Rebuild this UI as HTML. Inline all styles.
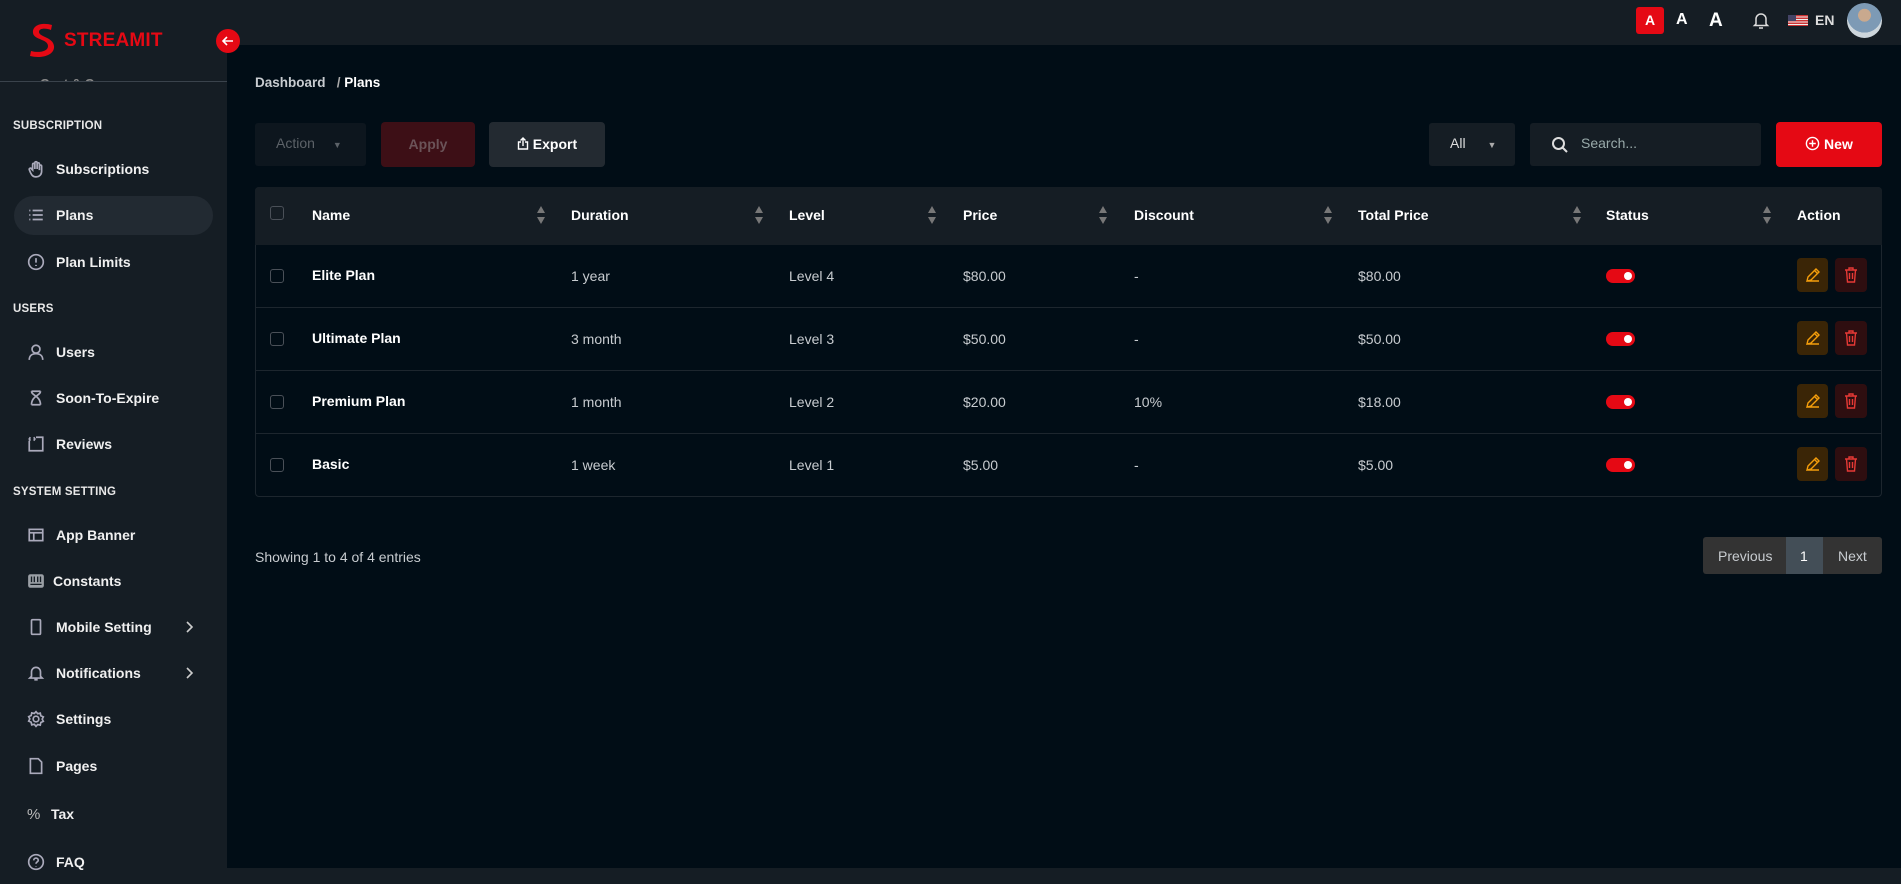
<!DOCTYPE html>
<html><head><meta charset="utf-8"><style>
*{box-sizing:border-box;margin:0;padding:0}
body{width:1901px;height:884px;background:#010d16;font-family:"Liberation Sans",sans-serif;color:#fff;position:relative;overflow:hidden;font-size:14px}
.a{position:absolute}
.side{left:0;top:0;width:227px;height:884px;background:#151d24}
.top{left:227px;top:0;width:1674px;height:45px;background:#151d24}
.bot{left:227px;top:868px;width:1674px;height:16px;background:#151d24}
.sec{left:13px;font-size:11.5px;font-weight:bold;color:#e8e8e8;letter-spacing:.2px}
.it{left:27px;font-size:14px;font-weight:bold;color:#f0f0f0;display:flex;align-items:center;gap:11px;height:20px}
.it svg{width:18px;height:18px;stroke:#aab;fill:none;stroke-width:1.5}
.th{font-weight:bold;font-size:14px;color:#fff}
.td{font-size:14px;color:#c8ccd0}
.sort{width:8px;height:18px}
.cb{width:14px;height:14px;border:1.5px solid #4a5058;border-radius:3px}
.tg{width:29px;height:14px;border-radius:7px;background:#e50914}
.tg:after{content:"";position:absolute;right:3px;top:3px;width:8px;height:8px;border-radius:50%;background:#fff}
.eb{width:31px;height:34px;border-radius:4px;background:#3a2506;display:flex;align-items:center;justify-content:center}
.db{width:32px;height:34px;border-radius:4px;background:#2e0e10;display:flex;align-items:center;justify-content:center}
.rl{left:256px;width:1626px;height:1px;background:#1d262e}
</style></head><body>
<div class="a side"></div>
<div class="a top"></div>
<div class="a bot"></div>
<!-- logo -->
<svg class="a" style="left:28px;top:22px" width="28" height="36" viewBox="0 0 28 36"><path d="M24 3 C14 0 4 3 5 11 C6 18 20 17 20 24 C20 30 10 31 3 29 L2 34 C14 37 27 33 26 24 C25 15 11 15 11 10 C11 6 18 6 23 8 Z" fill="#e50914"/></svg>
<div class="a" style="left:64px;top:30px;font-size:19px;font-weight:bold;color:#e50914;letter-spacing:.2px">STREAMIT</div>
<div class="a" style="left:216px;top:29px;width:24px;height:24px;border-radius:50%;background:#e50914"></div>
<svg class="a" style="left:220px;top:33px" width="16" height="16" viewBox="0 0 16 16" fill="none" stroke="#fff" stroke-width="1.6"><path d="M13 8H3M7 4L3 8l4 4"/></svg>
<div class="a" style="left:40px;top:76px;font-size:13px;font-weight:bold;color:#888;clip-path:inset(0 0 60% 0)">Cast &amp; Crew</div>
<div class="a" style="left:0;top:81px;width:227px;height:1px;background:#3a434c"></div>

<div class="a sec" style="top:120px">SUBSCRIPTION</div>
<div class="a it" style="top:159px"><svg viewBox="0 0 16 16"><path d="M5 9V4a1 1 0 012 0v4V2.5a1 1 0 012 0V8V3.5a1 1 0 012 0V9V5.5a1 1 0 012 0V10c0 3-2 5-5 5S4 13 3 11L2 8.5a1 1 0 012-.5z"/></svg>Subscriptions</div>
<div class="a" style="left:14px;top:196px;width:199px;height:39px;border-radius:20px;background:#222a32"></div>
<div class="a it" style="top:205px"><svg viewBox="0 0 16 16"><path d="M2 4h1M2 8h1M2 12h1M5 4h9M5 8h9M5 12h9"/></svg>Plans</div>
<div class="a it" style="top:252px"><svg viewBox="0 0 16 16"><circle cx="8" cy="8" r="6.5"/><path d="M8 4.5v4M8 10.5v1"/></svg>Plan Limits</div>
<div class="a sec" style="top:303px">USERS</div>
<div class="a it" style="top:342px"><svg viewBox="0 0 16 16"><circle cx="8" cy="5.5" r="3.5"/><path d="M2 15c0-4 3-5.5 6-5.5s6 1.5 6 5.5"/></svg>Users</div>
<div class="a it" style="top:388px"><svg viewBox="0 0 16 16"><path d="M4 2h8M4 14h8M4 2c0 4 8 4 8 12M12 2c0 4-8 4-8 12"/></svg>Soon-To-Expire</div>
<div class="a it" style="top:434px"><svg viewBox="0 0 16 16"><path d="M2 5V14h12V2H8M3 2L2 3.5 3 5M6 2l1 1.5L6 5"/></svg>Reviews</div>
<div class="a sec" style="top:486px">SYSTEM SETTING</div>
<div class="a it" style="top:525px"><svg viewBox="0 0 16 16"><rect x="2" y="3" width="12" height="10"/><path d="M2 6h12M6 6v7"/></svg>App Banner</div>
<div class="a it" style="top:571px;left:27px;gap:8px"><svg viewBox="0 0 16 16" style="fill:#9a9fa5;stroke:none"><rect x="1" y="2" width="14" height="12" rx="2"/><path d="M4 4v5M6.5 4v5M9.5 4v5M12 4v5M3 11h10" stroke="#151d24" stroke-width="1.2"/></svg>Constants</div>
<div class="a it" style="top:617px"><svg viewBox="0 0 16 16"><rect x="4" y="1.5" width="8" height="13" rx="1"/></svg>Mobile Setting</div>
<svg class="a" style="left:183px;top:620px" width="12" height="14" viewBox="0 0 12 14" fill="none" stroke="#ccc" stroke-width="1.6"><path d="M4 2l5 5-5 5"/></svg>
<div class="a it" style="top:663px"><svg viewBox="0 0 16 16"><path d="M4 11V7a4 4 0 018 0v4l1.5 1.5h-11zM6.5 14h3"/></svg>Notifications</div>
<svg class="a" style="left:183px;top:666px" width="12" height="14" viewBox="0 0 12 14" fill="none" stroke="#ccc" stroke-width="1.6"><path d="M4 2l5 5-5 5"/></svg>
<div class="a it" style="top:709px"><svg viewBox="0 0 16 16"><circle cx="8" cy="8" r="2.5"/><path d="M8 1.5l1.5 1.8 2.3-.5.5 2.3 2.2 1-1 2 1 2-2.2 1-.5 2.3-2.3-.5L8 14.5l-1.5-1.8-2.3.5-.5-2.3-2.2-1 1-2-1-2 2.2-1 .5-2.3 2.3.5z"/></svg>Settings</div>
<div class="a it" style="top:756px"><svg viewBox="0 0 16 16"><path d="M3 1.5h7l3 3v10H3z"/></svg>Pages</div>
<div class="a it" style="top:804px;gap:6px"><span style="font-weight:normal;color:#bbb;width:18px;font-size:15px">%</span>Tax</div>
<div class="a it" style="top:852px"><svg viewBox="0 0 16 16"><circle cx="8" cy="8" r="6.5"/><path d="M6 6.5a2 2 0 114 0c0 1.3-2 1.5-2 3M8 11.5v.5"/></svg>FAQ</div>

<!-- top bar -->
<div class="a" style="left:1636px;top:7px;width:28px;height:27px;border-radius:3px;background:#e50914;font-weight:bold;font-size:14px;text-align:center;line-height:27px">A</div>
<div class="a" style="left:1676px;top:11px;font-weight:bold;font-size:16px">A</div>
<div class="a" style="left:1709px;top:10px;font-weight:bold;font-size:19px">A</div>
<svg class="a" style="left:1752px;top:11px" width="18" height="20" viewBox="0 0 18 20" fill="none" stroke="#ddd" stroke-width="1.5"><path d="M4 13V8a5 5 0 0110 0v5l1.5 1.5h-13zM7 17h4"/></svg>
<svg class="a" style="left:1788px;top:15px" width="20" height="11" viewBox="0 0 20 11"><rect width="20" height="11" fill="#c33"/><path d="M0 2h20M0 4.5h20M0 7h20M0 9.5h20" stroke="#eee" stroke-width="1"/><rect width="8" height="6" fill="#446"/></svg>
<div class="a" style="left:1815px;top:12px;font-size:14px;font-weight:bold;color:#ddd">EN</div>
<div class="a" style="left:1847px;top:3px;width:35px;height:35px;border-radius:50%;background:radial-gradient(circle at 50% 35%,#c9a98e 0 22%,#7d9ab5 23% 60%,#cdd6dc 61%)"></div>

<!-- breadcrumb -->
<div class="a" style="left:255px;top:75px;font-size:13.5px;font-weight:bold;color:#c8ccd0">Dashboard&nbsp;&nbsp;&nbsp;<span style="color:#aaa">/</span> <span style="color:#fff">Plans</span></div>

<!-- toolbar -->
<div class="a" style="left:255px;top:123px;width:111px;height:43px;background:#0d161e;border-radius:3px;color:#5c6268;font-size:14px;padding:12px 0 0 21px">Action <span style="font-size:9px;margin-left:14px">▼</span></div>
<div class="a" style="left:381px;top:122px;width:94px;height:45px;background:#3d0f16;border-radius:4px;color:#6b5358;font-weight:bold;font-size:14px;text-align:center;line-height:45px">Apply</div>
<div class="a" style="left:489px;top:122px;width:116px;height:45px;background:#232a31;border-radius:4px;font-weight:bold;font-size:14px;text-align:center;line-height:45px"><svg width="12" height="13" viewBox="0 0 12 13" fill="none" stroke="#fff" stroke-width="1.4" style="vertical-align:-1px"><path d="M4 5H1.5v7h9V5H8M6 9V1M3.5 3.5L6 1l2.5 2.5"/></svg> Export</div>
<div class="a" style="left:1429px;top:123px;width:86px;height:43px;background:#151d24;border-radius:3px;font-size:14px;color:#ddd;padding:12px 0 0 21px">All <span style="font-size:9px;margin-left:18px;color:#aaa">▼</span></div>
<div class="a" style="left:1530px;top:123px;width:231px;height:43px;background:#151d24;border-radius:3px"></div>
<svg class="a" style="left:1551px;top:136px" width="18" height="18" viewBox="0 0 18 18" fill="none" stroke="#ddd" stroke-width="2"><circle cx="7.5" cy="7.5" r="5.5"/><path d="M11.5 11.5l4.5 4.5"/></svg>
<div class="a" style="left:1581px;top:135px;font-size:14px;color:#9aa">Search...</div>
<div class="a" style="left:1776px;top:122px;width:106px;height:45px;background:#e50914;border-radius:4px;font-weight:bold;font-size:14px;text-align:center;line-height:45px"><svg width="15" height="15" viewBox="0 0 16 16" fill="none" stroke="#fff" stroke-width="1.5" style="vertical-align:-2px"><circle cx="8" cy="8" r="6.5"/><path d="M8 4.5v7M4.5 8h7"/></svg> New</div>

<!-- table -->
<div class="a" style="left:255px;top:187px;width:1627px;height:310px;border:1px solid #1d262e;border-radius:4px"></div>
<div class="a" style="left:255px;top:187px;width:1627px;height:58px;background:#151d24;border-radius:4px 4px 0 0"></div>
<div class="a cb" style="left:270px;top:206px"></div>
<div class="a th" style="left:312px;top:207px">Name</div>
<div class="a th" style="left:571px;top:207px">Duration</div>
<div class="a th" style="left:789px;top:207px">Level</div>
<div class="a th" style="left:963px;top:207px">Price</div>
<div class="a th" style="left:1134px;top:207px">Discount</div>
<div class="a th" style="left:1358px;top:207px">Total Price</div>
<div class="a th" style="left:1606px;top:207px">Status</div>
<div class="a th" style="left:1797px;top:207px">Action</div>
<svg class="a sort" style="left:537px;top:206px" viewBox="0 0 8 18" fill="#777"><path d="M4 0l4 7H0zM4 18l4-7H0z"/></svg>
<svg class="a sort" style="left:755px;top:206px" viewBox="0 0 8 18" fill="#777"><path d="M4 0l4 7H0zM4 18l4-7H0z"/></svg>
<svg class="a sort" style="left:928px;top:206px" viewBox="0 0 8 18" fill="#777"><path d="M4 0l4 7H0zM4 18l4-7H0z"/></svg>
<svg class="a sort" style="left:1099px;top:206px" viewBox="0 0 8 18" fill="#777"><path d="M4 0l4 7H0zM4 18l4-7H0z"/></svg>
<svg class="a sort" style="left:1324px;top:206px" viewBox="0 0 8 18" fill="#777"><path d="M4 0l4 7H0zM4 18l4-7H0z"/></svg>
<svg class="a sort" style="left:1573px;top:206px" viewBox="0 0 8 18" fill="#777"><path d="M4 0l4 7H0zM4 18l4-7H0z"/></svg>
<svg class="a sort" style="left:1763px;top:206px" viewBox="0 0 8 18" fill="#777"><path d="M4 0l4 7H0zM4 18l4-7H0z"/></svg>

<div class="a rl" style="top:307px"></div>
<div class="a rl" style="top:370px"></div>
<div class="a rl" style="top:433px"></div>

<div class="a cb" style="left:270px;top:269px"></div>
<div class="a th" style="left:312px;top:267px">Elite Plan</div>
<div class="a td" style="left:571px;top:268px">1 year</div>
<div class="a td" style="left:789px;top:268px">Level 4</div>
<div class="a td" style="left:963px;top:268px">$80.00</div>
<div class="a td" style="left:1134px;top:268px">-</div>
<div class="a td" style="left:1358px;top:268px">$80.00</div>
<div class="a tg" style="left:1606px;top:269px"></div>

<div class="a cb" style="left:270px;top:332px"></div>
<div class="a th" style="left:312px;top:330px">Ultimate Plan</div>
<div class="a td" style="left:571px;top:331px">3 month</div>
<div class="a td" style="left:789px;top:331px">Level 3</div>
<div class="a td" style="left:963px;top:331px">$50.00</div>
<div class="a td" style="left:1134px;top:331px">-</div>
<div class="a td" style="left:1358px;top:331px">$50.00</div>
<div class="a tg" style="left:1606px;top:332px"></div>

<div class="a cb" style="left:270px;top:395px"></div>
<div class="a th" style="left:312px;top:393px">Premium Plan</div>
<div class="a td" style="left:571px;top:394px">1 month</div>
<div class="a td" style="left:789px;top:394px">Level 2</div>
<div class="a td" style="left:963px;top:394px">$20.00</div>
<div class="a td" style="left:1134px;top:394px">10%</div>
<div class="a td" style="left:1358px;top:394px">$18.00</div>
<div class="a tg" style="left:1606px;top:395px"></div>

<div class="a cb" style="left:270px;top:458px"></div>
<div class="a th" style="left:312px;top:456px">Basic</div>
<div class="a td" style="left:571px;top:457px">1 week</div>
<div class="a td" style="left:789px;top:457px">Level 1</div>
<div class="a td" style="left:963px;top:457px">$5.00</div>
<div class="a td" style="left:1134px;top:457px">-</div>
<div class="a td" style="left:1358px;top:457px">$5.00</div>
<div class="a tg" style="left:1606px;top:458px"></div>

<div class="a eb" style="left:1797px;top:258px"><svg width="16" height="16" viewBox="0 0 16 16" fill="none" stroke="#f59e0b" stroke-width="1.4"><path d="M2 14l1-4 8-8 3 3-8 8zM9.5 3.5l3 3M2 14h12"/></svg></div>
<div class="a db" style="left:1835px;top:258px"><svg width="14" height="16" viewBox="0 0 14 16" fill="none" stroke="#e53935" stroke-width="1.4"><path d="M1 3h12M5 3V1h4v2M2.5 3l1 12h7l1-12M5.5 6v6M8.5 6v6"/></svg></div>
<div class="a eb" style="left:1797px;top:321px"><svg width="16" height="16" viewBox="0 0 16 16" fill="none" stroke="#f59e0b" stroke-width="1.4"><path d="M2 14l1-4 8-8 3 3-8 8zM9.5 3.5l3 3M2 14h12"/></svg></div>
<div class="a db" style="left:1835px;top:321px"><svg width="14" height="16" viewBox="0 0 14 16" fill="none" stroke="#e53935" stroke-width="1.4"><path d="M1 3h12M5 3V1h4v2M2.5 3l1 12h7l1-12M5.5 6v6M8.5 6v6"/></svg></div>
<div class="a eb" style="left:1797px;top:384px"><svg width="16" height="16" viewBox="0 0 16 16" fill="none" stroke="#f59e0b" stroke-width="1.4"><path d="M2 14l1-4 8-8 3 3-8 8zM9.5 3.5l3 3M2 14h12"/></svg></div>
<div class="a db" style="left:1835px;top:384px"><svg width="14" height="16" viewBox="0 0 14 16" fill="none" stroke="#e53935" stroke-width="1.4"><path d="M1 3h12M5 3V1h4v2M2.5 3l1 12h7l1-12M5.5 6v6M8.5 6v6"/></svg></div>
<div class="a eb" style="left:1797px;top:447px"><svg width="16" height="16" viewBox="0 0 16 16" fill="none" stroke="#f59e0b" stroke-width="1.4"><path d="M2 14l1-4 8-8 3 3-8 8zM9.5 3.5l3 3M2 14h12"/></svg></div>
<div class="a db" style="left:1835px;top:447px"><svg width="14" height="16" viewBox="0 0 14 16" fill="none" stroke="#e53935" stroke-width="1.4"><path d="M1 3h12M5 3V1h4v2M2.5 3l1 12h7l1-12M5.5 6v6M8.5 6v6"/></svg></div>

<div class="a td" style="left:255px;top:549px">Showing 1 to 4 of 4 entries</div>
<div class="a" style="left:1703px;top:537px;width:179px;height:37px;background:#333;border-radius:3px"></div>
<div class="a" style="left:1786px;top:537px;width:37px;height:37px;background:#434e57"></div>
<div class="a td" style="left:1718px;top:548px">Previous</div>
<div class="a" style="left:1800px;top:548px;font-size:14px;color:#fff">1</div>
<div class="a td" style="left:1838px;top:548px">Next</div>
</body></html>
